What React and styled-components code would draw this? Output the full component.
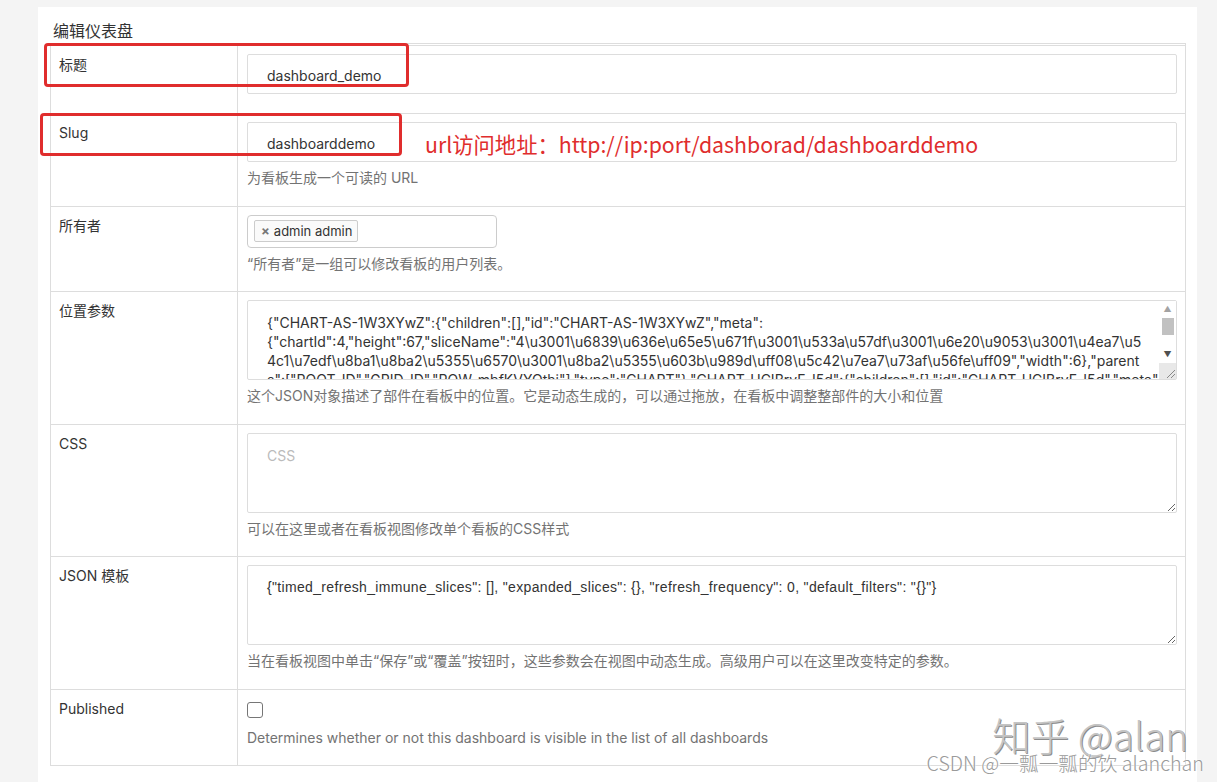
import React from 'react';
import styled, { createGlobalStyle } from 'styled-components';

const POSITION_JSON = [
  '{"CHART-AS-1W3XYwZ":{"children":[],"id":"CHART-AS-1W3XYwZ","meta":',
  '{"chartId":4,"height":67,"sliceName":"4\\u3001\\u6839\\u636e\\u65e5\\u671f\\u3001\\u533a\\u57df\\u3001\\u6e20\\u9053\\u3001\\u4ea7\\u5',
  '4c1\\u7edf\\u8ba1\\u8ba2\\u5355\\u6570\\u3001\\u8ba2\\u5355\\u603b\\u989d\\uff08\\u5c42\\u7ea7\\u73af\\u56fe\\uff09","width":6},"parent',
  's":["ROOT_ID","GRID_ID","ROW-mbfKVYOthi"],"type":"CHART"},"CHART-UCIBrvF-I5d":{"children":[],"id":"CHART-UCIBrvF-I5d","meta":',
].join('\n');

const JSON_TEMPLATE =
  '{"timed_refresh_immune_slices": [], "expanded_slices": {}, "refresh_frequency": 0, "default_filters": "{}"}';

const GlobalStyle = createGlobalStyle`
  body {
    margin: 0;
    background: #f4f4f4;
    font-family: Inter, "Noto Sans CJK SC", sans-serif;
    color: #333;
  }
`;

export default function App() {
  return (
    <>
      <GlobalStyle />
      <Page>
        <Card>
          <Title>编辑仪表盘</Title>
          <Table>
            <Row>
              <Label>标题</Label>
              <Value $first>
                <TextInput defaultValue="dashboard_demo" />
              </Value>
            </Row>
            <Row>
              <Label>Slug</Label>
              <Value>
                <TextInput defaultValue="dashboarddemo" />
                <Help>为看板生成一个可读的 URL</Help>
              </Value>
            </Row>
            <Row>
              <Label>所有者</Label>
              <Value>
                <SelectBox>
                  <Tag><TagX>×</TagX>admin admin</Tag>
                </SelectBox>
                <Help>“所有者”是一组可以修改看板的用户列表。</Help>
              </Value>
            </Row>
            <Row>
              <Label>位置参数</Label>
              <Value>
                <AreaWrap>
                  <TextArea wrap="off" $noResize defaultValue={POSITION_JSON} />
                  <Scrollbar>
                    <Arrow>▲</Arrow>
                    <Thumb />
                    <Arrow>▼</Arrow>
                  </Scrollbar>
                  <Corner>
                    <svg width="12" height="12" viewBox="0 0 12 12">
                      <path d="M11 3 L3 11 M11 7 L7 11" stroke="#888" strokeWidth="1" />
                    </svg>
                  </Corner>
                </AreaWrap>
                <Help>这个JSON对象描述了部件在看板中的位置。它是动态生成的，可以通过拖放，在看板中调整整部件的大小和位置</Help>
              </Value>
            </Row>
            <Row>
              <Label>CSS</Label>
              <Value>
                <TextArea placeholder="CSS" />
                <Help>可以在这里或者在看板视图修改单个看板的CSS样式</Help>
              </Value>
            </Row>
            <Row>
              <Label>JSON 模板</Label>
              <Value>
                <TextArea $arial defaultValue={JSON_TEMPLATE} />
                <Help>当在看板视图中单击“保存”或“覆盖”按钮时，这些参数会在视图中动态生成。高级用户可以在这里改变特定的参数。</Help>
              </Value>
            </Row>
            <Row>
              <Label>Published</Label>
              <Value>
                <Check type="checkbox" />
                <Help $spaced>Determines whether or not this dashboard is visible in the list of all dashboards</Help>
              </Value>
            </Row>
          </Table>

          <Marker style={{ left: 6, top: 36, width: 359, height: 38 }} />
          <Marker style={{ left: 2, top: 106, width: 356, height: 37 }} />
          <Note>url访问地址：http://ip:port/dashborad/dashboarddemo</Note>

          <Watermark>
            <Zhihu>知乎 @alan</Zhihu>
            <Csdn>CSDN @一瓢一瓢的饮 alanchan</Csdn>
          </Watermark>
        </Card>
      </Page>
    </>
  );
}

const Page = styled.div`
  padding: 7px 20px 0 38px;
`;

const Card = styled.div`
  position: relative;
  background: #fff;
  min-height: 775px;
  padding: 14px 11px 0 12px;
  box-sizing: border-box;
`;

const Title = styled.h3`
  margin: 0 0 2px 3px;
  font-size: 16px;
  font-weight: 400;
  line-height: 20px;
  color: #333;
`;

const Table = styled.div`
  border: 1px solid #ddd;
  border-top: 3px double #ddd;
`;

const Row = styled.div`
  display: grid;
  grid-template-columns: 187px 1fr;
  & + & {
    border-top: 1px solid #ddd;
  }
`;

const Label = styled.div`
  padding: 9px 8px;
  font-size: 14px;
  line-height: 20px;
  color: #333;
  border-right: 1px solid #ddd;
`;

const Value = styled.div`
  padding: ${({ $first }) => ($first ? '8px 8px 19px 9px' : '8px 8px 17.5px 9px')};
  min-width: 0;
`;

const TextInput = styled.input`
  display: block;
  width: 100%;
  height: 40px;
  box-sizing: border-box;
  border: 1px solid #ddd;
  border-radius: 2px;
  padding: 2px 19px 0;
  font-family: Inter, "Noto Sans CJK SC", sans-serif;
  font-size: 14px;
  color: #333;
  outline: none;
`;

const Help = styled.div`
  margin-top: ${({ $spaced }) => ($spaced ? '10px' : '6px')};
  font-size: 14px;
  line-height: 20px;
  color: #737373;
`;

const SelectBox = styled.div`
  display: flex;
  align-items: center;
  width: 250px;
  height: 33px;
  box-sizing: border-box;
  border: 1px solid #ccc;
  border-radius: 4px;
  padding: 0 6px;
`;

const Tag = styled.span`
  display: inline-flex;
  align-items: center;
  gap: 4px;
  height: 20px;
  padding: 0 5px 0 6px;
  border: 1px solid #ccc;
  border-radius: 2px;
  background: #fafafa;
  font-size: 13px;
  color: #333;
`;

const TagX = styled.span`
  font-size: 13px;
  font-weight: 700;
  color: #777;
`;

const AreaWrap = styled.div`
  position: relative;
`;

const TextArea = styled.textarea`
  display: block;
  width: 100%;
  height: 80px;
  box-sizing: border-box;
  border: 1px solid #ddd;
  border-radius: 2px;
  padding: 12px 19px 10px;
  font-family: ${({ $arial }) => ($arial ? '"Liberation Sans", Arial' : 'Inter, "Noto Sans CJK SC"')}, sans-serif;
  font-size: 14px;
  letter-spacing: ${({ $arial }) => ($arial ? '0.33px' : 'normal')};
  line-height: 19px;
  color: #333;
  resize: ${({ $noResize }) => ($noResize ? 'none' : 'vertical')};
  overflow: hidden;
  outline: none;

  &::placeholder {
    color: #bbb;
  }
`;

const Scrollbar = styled.div`
  position: absolute;
  top: 1px;
  right: 1px;
  width: 17px;
  height: 62px;
  display: flex;
  flex-direction: column;
  align-items: center;
  background: #fff;
`;

const Arrow = styled.span`
  font-size: 8px;
  line-height: 17px;
  height: 17px;
  color: #505050;
  &:first-child { color: #a3a3a3; }
`;

const Thumb = styled.div`
  width: 12px;
  height: 17px;
  background: #c1c1c1;
  flex: none;
  margin-bottom: auto;
`;

const Corner = styled.div`
  position: absolute;
  right: 1px;
  bottom: 1px;
  width: 17px;
  height: 16px;
  background: #e8e8e8;
  display: flex;
  align-items: flex-end;
  justify-content: flex-end;
`;

const Check = styled.input`
  appearance: none;
  display: block;
  width: 16px;
  height: 16px;
  margin: 4px 0 0;
  border: 1px solid #767676;
  border-radius: 3px;
  background: #fff;
`;

const Marker = styled.div`
  position: absolute;
  border: 3px solid #e02d2d;
  border-radius: 4px;
  pointer-events: none;
`;

const Note = styled.div`
  position: absolute;
  left: 387px;
  top: 124px;
  font-family: "Noto Sans CJK SC", "Open Sans", sans-serif;
  font-size: 21.3px;
  line-height: 26px;
  color: #e02d2d;
  white-space: nowrap;
`;

const Watermark = styled.div`
  position: absolute;
  left: 870px;
  top: 710px;
  display: flex;
  flex-direction: column;
  align-items: flex-end;
  width: 296px;
  pointer-events: none;
`;

const Zhihu = styled.div`
  font-family: "Noto Sans CJK SC", sans-serif;
  font-size: 38.5px;
  font-weight: 300;
  line-height: 34px;
  color: #c4c4c4;
  text-shadow: 1px 1px 0 #8c8c8c;
  margin-right: 16px;
  white-space: nowrap;
`;

const Csdn = styled.div`
  margin-top: 1px;
  font-family: "Noto Sans CJK SC", sans-serif;
  font-size: 19.7px;
  font-weight: 300;
  line-height: 22px;
  color: #9a9a9a;
  text-shadow: 0 0 2px #fff, 0 0 2px #fff;
  white-space: nowrap;
`;
